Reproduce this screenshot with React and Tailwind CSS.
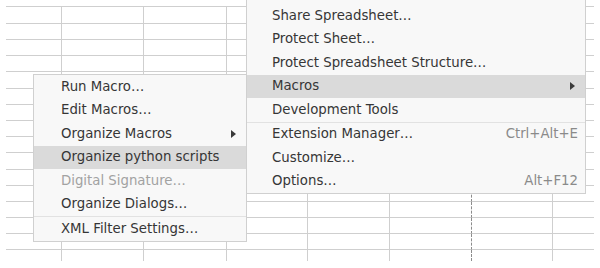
import React from "react";

const ROWS = 16;
const COLS = 8;

function cellClass(r, c) {
  const parts = ["border-[#cfcfcf]"];
  if (r < ROWS - 1) parts.push("border-b");
  if (c < COLS - 1) parts.push("border-r");
  if (c === 5) parts.push("[border-right-style:dashed] border-r-[#8c8c8c]");
  return parts.join(" ");
}

function Arrow() {
  return (
    <svg width="5" height="8" viewBox="0 0 5 8" className="shrink-0">
      <polygon points="0,0 5,4 0,8" fill="#3a3a3a" />
    </svg>
  );
}

function Item({ label, shortcut, arrow, active, disabled, pl }) {
  return (
    <div
      className={
        "flex h-[23.5px] items-center justify-between " +
        pl +
        " " +
        (active ? "bg-[#dadada]" : "")
      }
    >
      <span className={disabled ? "text-[#a2a2a2]" : "text-[#363636]"}>{label}</span>
      {shortcut && <span className="pr-[7px] text-[#8a8a8a]">{shortcut}</span>}
      {arrow && (
        <span className="pr-[10px]">
          <Arrow />
        </span>
      )}
    </div>
  );
}

export default function App() {
  const cells = [];
  for (let r = 0; r < ROWS; r++) {
    for (let c = 0; c < COLS; c++) {
      cells.push(<div key={r + "-" + c} className={cellClass(r, c)} />);
    }
  }
  return (
    <div className="relative h-[268px] w-[600px] overflow-hidden bg-white font-['DejaVu_Sans',sans-serif] text-[13.3px]">
      <div className="pl-[6px] pt-[6px]">
        <div className="grid w-[588px] grid-cols-[56px_82px_83px_81px_82px_82px_81px_41px] grid-rows-[17px_16px_16px_16px_17px_16px_16px_16px_16px_17px_16px_16px_16px_16px_16px_11px] border-t border-[#cfcfcf]">
          {cells}
        </div>
      </div>

      <div className="absolute left-[246px] top-0 w-[340px] border border-t-0 border-[#d0d0d0] bg-[#f8f8f8] pt-[4px]">
        <Item pl="pl-[25px]" label="Share Spreadsheet…" />
        <Item pl="pl-[25px]" label="Protect Sheet…" />
        <Item pl="pl-[25px]" label="Protect Spreadsheet Structure…" />
        <Item pl="pl-[25px]" label="Macros" arrow active />
        <Item pl="pl-[25px]" label="Development Tools" />
        <div className="h-px bg-[#e2e2e2]" />
        <Item pl="pl-[25px]" label="Extension Manager…" shortcut="Ctrl+Alt+E" />
        <Item pl="pl-[25px]" label="Customize…" />
        <Item pl="pl-[25px]" label="Options…" shortcut="Alt+F12" />
      </div>

      <div className="absolute left-[33px] top-[74px] w-[214px] border border-[#d0d0d0] bg-[#f8f8f8]">
        <Item pl="pl-[27px]" label="Run Macro…" />
        <Item pl="pl-[27px]" label="Edit Macros…" />
        <Item pl="pl-[27px]" label="Organize Macros" arrow />
        <Item pl="pl-[27px]" label="Organize python scripts" active />
        <Item pl="pl-[27px]" label="Digital Signature…" disabled />
        <Item pl="pl-[27px]" label="Organize Dialogs…" />
        <div className="h-px bg-[#e2e2e2]" />
        <Item pl="pl-[27px]" label="XML Filter Settings…" />
      </div>
    </div>
  );
}
